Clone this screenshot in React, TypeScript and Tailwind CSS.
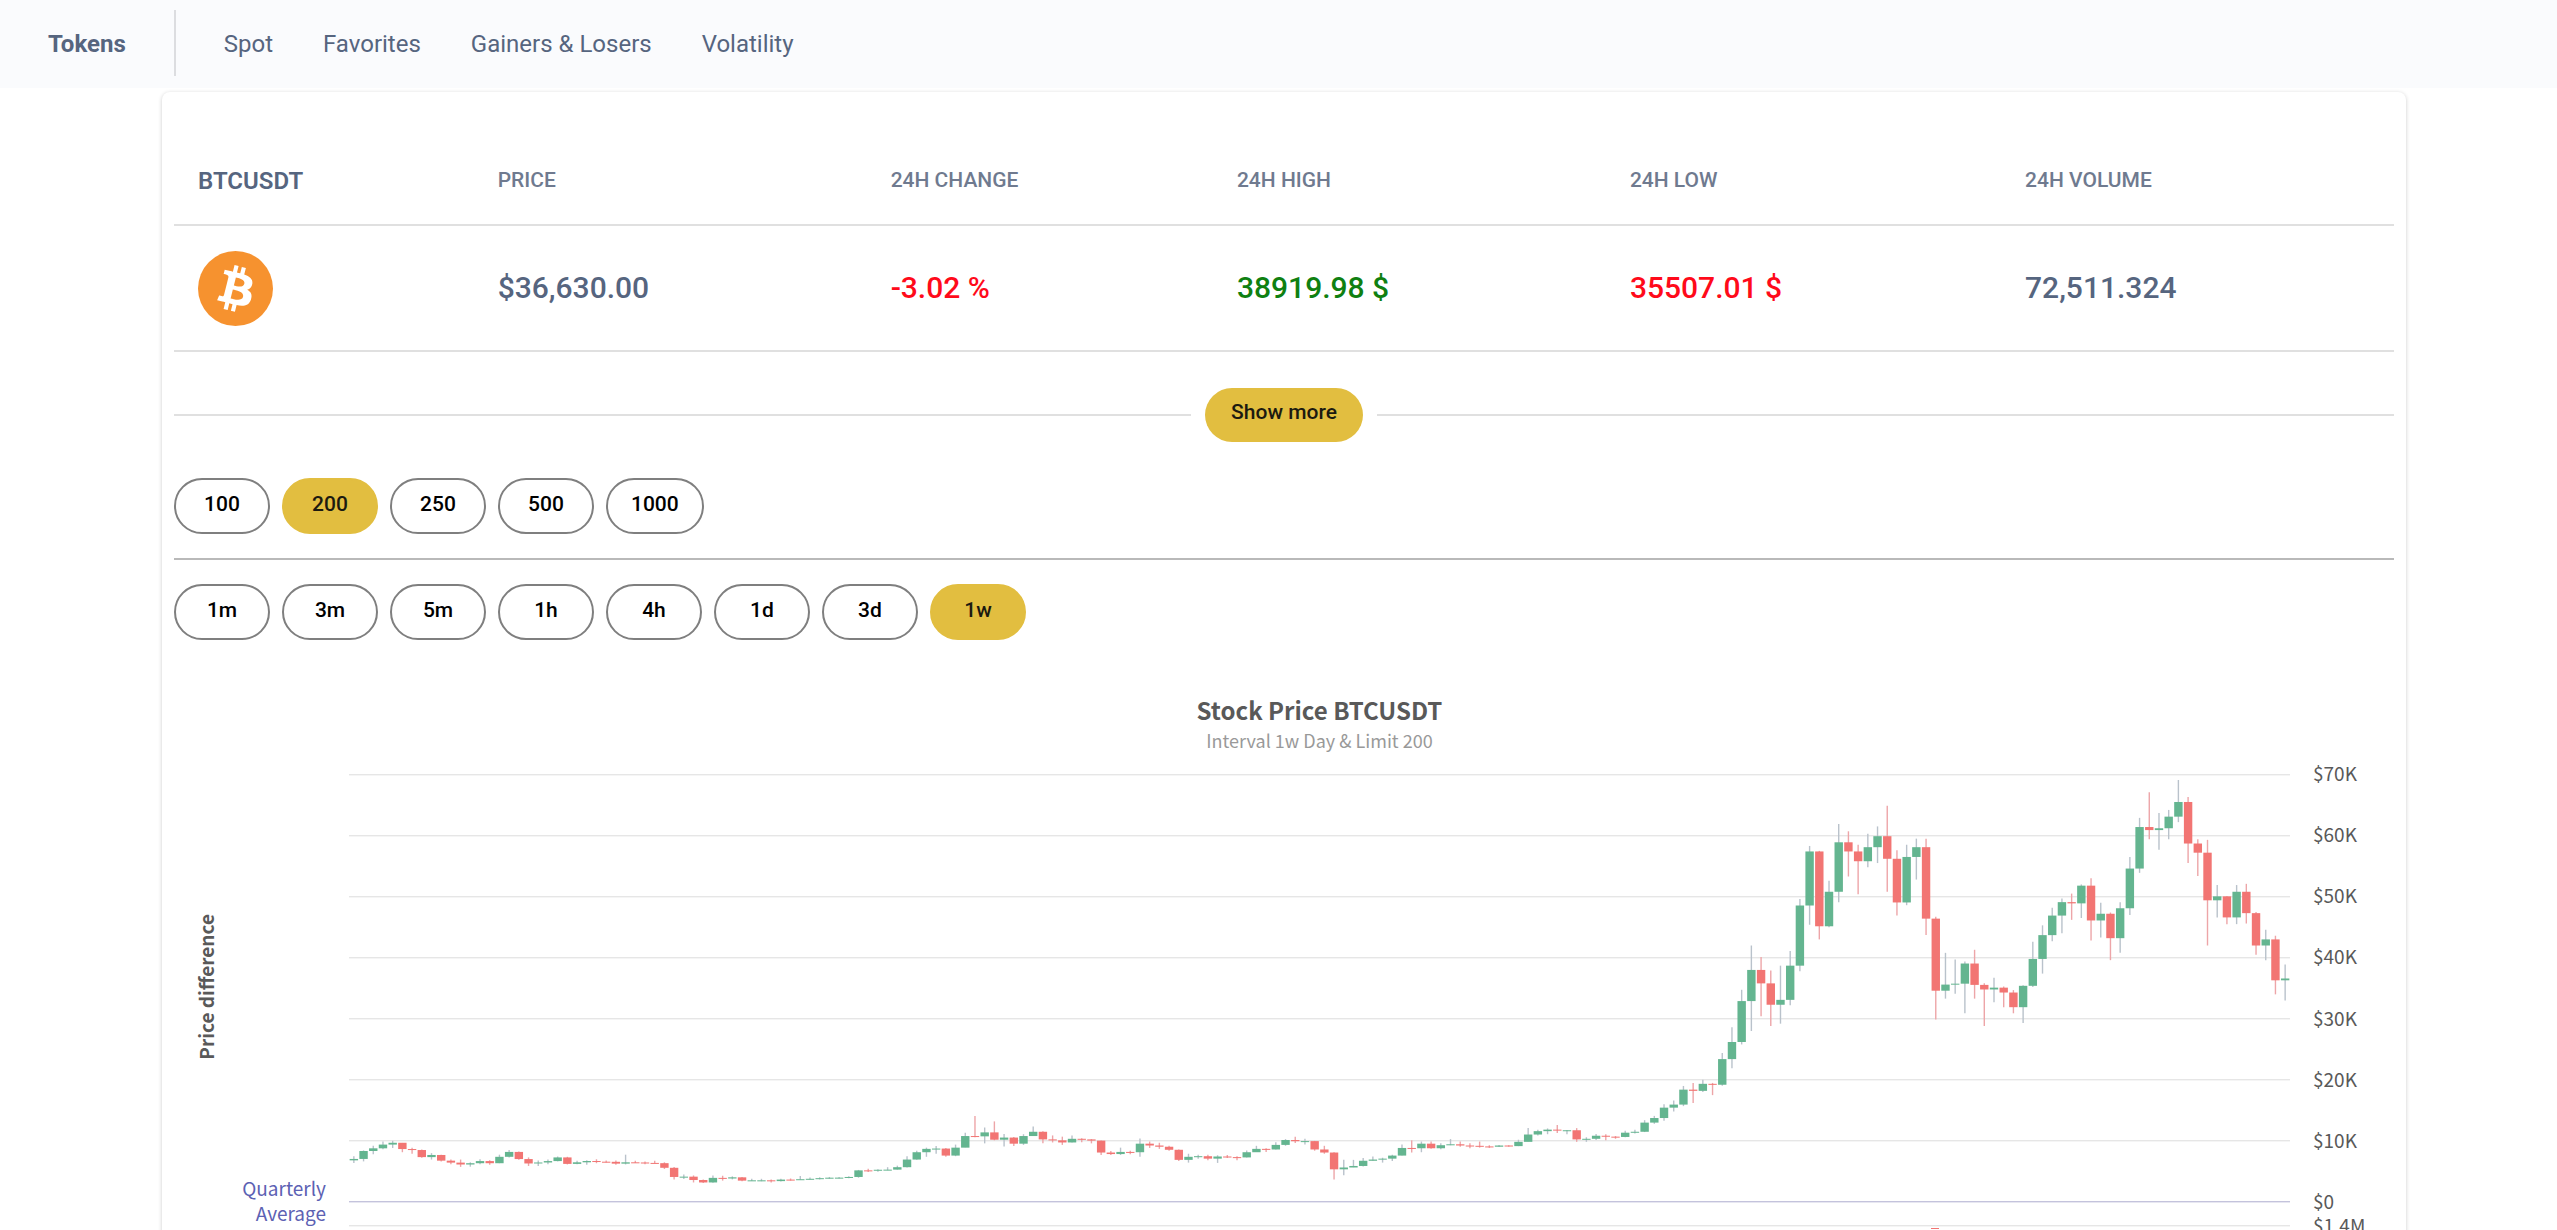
import { useState } from "react";

const tabs = ["Spot", "Favorites", "Gainers & Losers", "Volatility"];

const limits = ["100", "200", "250", "500", "1000"];
const intervals = ["1m", "3m", "5m", "1h", "4h", "1d", "3d", "1w"];

const priceTicks = ["$70K", "$60K", "$50K", "$40K", "$30K", "$20K", "$10K", "$0"];

// weekly candles in thousands of dollars: [high, low, close], each one opens at the previous close
const candles: [number, number, number][] = [
  [7.5, 6.4, 7.05], [8.45, 6.65, 8.35], [9.2, 7.8, 8.79], [9.9, 8.65, 9.4], [10.02, 8.85, 9.7],
  [9.67, 8.15, 8.67], [8.9, 7.9, 8.51], [8.6, 7.25, 7.35], [8, 6.95, 7.7], [7.75, 6.65, 6.77],
  [6.95, 6.2, 6.45], [6.95, 5.75, 6.14], [6.5, 5.78, 6.35], [7, 6.2, 6.7], [6.85, 6.1, 6.35],
  [7.75, 6.35, 7.4], [8.5, 7.3, 8.2], [8.25, 6.9, 7.03], [7.3, 5.9, 6.31], [6.8, 5.9, 6.47],
  [6.95, 6.2, 6.7], [7.45, 6.65, 7.3], [7.4, 6.15, 6.24], [6.75, 6.2, 6.5], [6.85, 6.1, 6.71],
  [7, 6.35, 6.6], [6.8, 6.45, 6.58], [6.8, 6.1, 6.28], [7.75, 6.15, 6.5], [6.75, 6.4, 6.47],
  [6.65, 6.2, 6.4], [6.75, 6.35, 6.36], [6.5, 5.4, 5.6], [5.75, 3.7, 4.1], [4.5, 3.75, 4.15],
  [4.35, 3.2, 3.6], [3.7, 3.1, 3.2], [4.35, 3.15, 3.95], [4.3, 3.5, 3.85], [4.2, 3.7, 4.04],
  [4.1, 3.4, 3.5], [3.8, 3.45, 3.55], [3.8, 3.4, 3.55], [3.7, 3.2, 3.42], [3.8, 3.35, 3.67],
  [3.85, 3.5, 3.62], [4.25, 3.65, 3.73], [4, 3.7, 3.8], [4.05, 3.7, 3.9], [4.1, 3.8, 3.98],
  [4.08, 3.85, 3.99], [4.2, 3.9, 4.1], [5.25, 3.98, 5.18], [5.45, 4.9, 5.15], [5.35, 4.95, 5.28],
  [5.7, 5.2, 5.3], [5.95, 5.3, 5.7], [7.5, 5.65, 6.95], [8.4, 6.9, 8.15], [8.9, 7.4, 8.7],
  [9.15, 7.9, 8.75], [8.85, 7.4, 7.6], [9.4, 7.5, 8.9], [11.35, 8.95, 10.8], [14.1, 10.6, 10.75],
  [12.2, 9.6, 11.4], [13.2, 10.1, 10.2], [11.15, 9.1, 10.55], [10.65, 9.15, 9.55], [11.1, 9.35, 10.8],
  [12.35, 10.8, 11.5], [11.6, 9.6, 10.25], [10.9, 9.75, 10.1], [10.7, 9.35, 9.75], [10.9, 9.75, 10.35],
  [10.45, 9.8, 10.25], [10.3, 9.6, 10.05], [10.05, 7.7, 8.1], [8.35, 7.7, 7.85], [8.9, 7.7, 8.2],
  [8.4, 7.8, 8.15], [10.4, 7.4, 9.55], [9.9, 8.85, 9.25], [9.7, 8.7, 9.05], [9.2, 8.4, 8.55],
  [8.6, 6.7, 6.9], [7.9, 6.45, 7.4], [7.75, 7.1, 7.5], [7.75, 6.85, 7.1], [7.65, 6.4, 7.45],
  [7.7, 7.2, 7.35], [7.5, 6.85, 7.3], [8.45, 7.3, 8.15], [9.2, 8.2, 8.7], [8.8, 8.2, 8.6],
  [9.8, 8.6, 9.35], [10.3, 9.2, 10.15], [10.7, 9.65, 9.95], [10.35, 9.4, 9.97], [10, 8.4, 8.6],
  [9.2, 7.9, 8.1], [8.15, 3.7, 5.35], [6.9, 4.4, 5.65], [6.9, 5.7, 5.9], [7.2, 5.8, 6.75],
  [7.45, 6.75, 6.95], [7.25, 6.45, 7.1], [7.75, 6.7, 7.6], [9.4, 7.6, 8.85], [10.1, 8.1, 8.8],
  [9.9, 8.15, 9.55], [9.9, 8.7, 8.8], [9.6, 8.65, 9.3], [10.3, 9.3, 9.45], [9.9, 9.05, 9.25],
  [9.6, 8.8, 9.2], [9.9, 8.9, 9.1], [9.3, 8.85, 9.05], [9.35, 9, 9.25], [9.3, 9.05, 9.15],
  [10.2, 9.15, 9.85], [12.1, 9.95, 11.05], [11.85, 10.9, 11.6], [12.05, 11.1, 11.85], [12.6, 11.3, 11.7],
  [11.8, 11.1, 11.75], [12.1, 9.85, 10.25], [10.6, 9.85, 10.35], [11.15, 10.15, 10.85], [11.1, 10.1, 10.7],
  [10.8, 10.35, 10.65], [11.65, 10.6, 11.35], [11.85, 11.2, 11.5], [13.4, 11.45, 13], [14.1, 12.8, 13.75],
  [16, 13.3, 15.45], [16.6, 14.8, 15.95], [19, 15.7, 18.4], [19.5, 16.2, 18.2], [20, 18, 19.35],
  [19.5, 17.5, 19.2], [24.4, 19.05, 23.4], [28.6, 21.9, 26.2], [34.75, 25.8, 32.9], [42, 28, 38],
  [40.1, 30.4, 35.8], [37.9, 28.8, 32.3], [38.7, 29.2, 33.1], [41.1, 32.2, 38.7], [49.6, 37.8, 48.55],
  [58.3, 45.4, 57.4], [57.5, 43, 45.15], [52.6, 45, 50.8], [61.9, 49.1, 58.9], [60.7, 53.3, 57.4],
  [58.5, 50.4, 55.8], [60.3, 54.8, 58.1], [61.5, 55.5, 59.9], [64.9, 50.8, 56.2], [57.6, 46.9, 49.05],
  [58.5, 48.6, 56.5], [59.5, 52.8, 58.1], [59.5, 43.7, 46.4], [46.7, 29.9, 34.6], [40.8, 33.3, 35.6],
  [39.7, 34.1, 35.75], [39.4, 30.9, 39.05], [41.3, 33.3, 35.55], [35.8, 28.8, 34.8], [36.7, 32.7, 35.1],
  [35.3, 31.9, 34.3], [34.7, 30.9, 31.9], [35.5, 29.3, 35.4], [42.6, 35.2, 39.8], [45.3, 37.4, 43.7],
  [48.2, 42.7, 46.9], [49.7, 44, 49.1], [50.5, 46.2, 48.9], [52, 46.5, 51.8], [53, 42.8, 46.1],
  [49, 43.3, 47.2], [47.4, 39.6, 43.2], [49.1, 40.8, 48.1], [56.5, 47, 54.6], [62.9, 53.9, 61.4],
  [67.1, 59.4, 60.9], [63.7, 57.7, 61.2], [64.2, 59.4, 63.1], [69.1, 62.2, 65.5], [66.3, 55.5, 58.7],
  [59.4, 53.4, 57.2], [59.3, 42, 49.4], [51.9, 46.6, 50.05], [50.1, 45.5, 46.6], [51.9, 45.5, 50.8],
  [52.1, 45.6, 47.3], [47.5, 40.5, 42], [44.6, 39.6, 43], [43.6, 34, 36.3], [38.9, 33, 36.6],
];

const FIRST_OPEN = 6.82;
const PLOT_WIDTH = 1941;
const PLOT_HEIGHT = 456;
const STEP = PLOT_WIDTH / candles.length;

// $70K sits at the top line, $0 at the bottom one
const toY = (price: number) => 429 - price * 6.107;

function BitcoinIcon() {
  return (
    <svg viewBox="0 0 32 32" className="h-[75px] w-[75px]" aria-label="Bitcoin" role="img">
      <circle cx="16" cy="16" r="16" fill="#f6922f" />
      <path
        fill="#fff"
        d="M23.189 14.02c.314-2.096-1.283-3.223-3.465-3.975l.708-2.84-1.728-.43-.69 2.765c-.454-.114-.92-.22-1.385-.326l.695-2.783L15.596 6l-.708 2.839c-.376-.086-.746-.17-1.104-.26l.002-.009-2.384-.595-.46 1.846s1.283.294 1.256.312c.7.175.826.638.805 1.006l-.806 3.235c.048.012.11.03.18.057l-.183-.045-1.13 4.532c-.086.212-.303.531-.793.41.018.025-1.256-.313-1.256-.313l-.858 1.978 2.25.561c.418.105.828.215 1.231.318l-.715 2.872 1.727.43.708-2.84c.472.127.93.245 1.378.357l-.706 2.828 1.728.43.715-2.866c2.948.558 5.164.333 6.097-2.333.752-2.146-.037-3.385-1.588-4.192 1.13-.26 1.98-1.003 2.207-2.538zm-3.95 5.538c-.533 2.147-4.148.986-5.32.695l.95-3.805c1.172.293 4.929.872 4.37 3.11zm.535-5.569c-.487 1.953-3.495.96-4.47.717l.86-3.45c.975.243 4.118.696 3.61 2.733z"
      />
    </svg>
  );
}

function NavBar() {
  return (
    <nav className="flex h-[88px] items-center bg-[#fafbfd] px-12 text-2xl text-[#56657f]">
      <a href="#tokens" className="font-bold">
        Tokens
      </a>
      <div className="mx-12 mb-[2px] h-[66px] w-[2px] bg-[#dcdde0]" />
      <div className="flex gap-[50px]">
        {tabs.map((tab) => (
          <a key={tab} href="#tokens">
            {tab}
          </a>
        ))}
      </div>
    </nav>
  );
}

function TickerTable() {
  return (
    <table className="w-full table-fixed text-left">
      <thead>
        <tr className="h-[90px] border-b-2 border-[#e0e0e0] text-[21px] text-[#6f7a8f]">
          <th className="w-[13.5%] px-6 pt-[3px] text-2xl font-semibold text-[#56657f]">BTCUSDT</th>
          <th className="w-[17.7%] px-6 pt-[3px] font-medium">PRICE</th>
          <th className="w-[15.6%] px-6 pt-[3px] font-medium">24H CHANGE</th>
          <th className="w-[17.7%] px-6 pt-[3px] font-medium">24H HIGH</th>
          <th className="w-[17.8%] px-6 pt-[3px] font-medium">24H LOW</th>
          <th className="w-[17.7%] px-6 pt-[3px] font-medium">24H VOLUME</th>
        </tr>
      </thead>
      <tbody>
        <tr className="h-[126px] border-b-2 border-[#e0e0e0] text-3xl font-medium text-[#56657f]">
          <td className="px-6">
            <BitcoinIcon />
          </td>
          <td className="px-6">$36,630.00</td>
          <td className="px-6 text-[#ff0a1a]">-3.02 %</td>
          <td className="px-6 text-[#0f8011]">38919.98 $</td>
          <td className="px-6 text-[#ff0a1a]">35507.01 $</td>
          <td className="px-6">72,511.324</td>
        </tr>
      </tbody>
    </table>
  );
}

type PillGroupProps = {
  label: string;
  options: string[];
  value: string;
  onChange: (value: string) => void;
};

function PillGroup({ label, options, value, onChange }: PillGroupProps) {
  return (
    <div role="group" aria-label={label} className="flex gap-3">
      {options.map((option) => (
        <button
          key={option}
          type="button"
          aria-pressed={option === value}
          onClick={() => onChange(option)}
          className={
            option === value
              ? "h-14 min-w-24 rounded-full border-2 border-[#e2be40] bg-[#e2be40] px-[23px] pb-0.5 text-[21px] font-medium text-[#1c1a10]"
              : "h-14 min-w-24 rounded-full border-2 border-[#7f7f7f] bg-white px-[23px] pb-0.5 text-[21px] font-medium text-black"
          }
        >
          {option}
        </button>
      ))}
    </div>
  );
}

function CandlePlot() {
  return (
    <svg
      viewBox={`0 0 ${PLOT_WIDTH} ${PLOT_HEIGHT}`}
      preserveAspectRatio="none"
      className="h-[456px] w-full"
      role="img"
      aria-label="Weekly candlestick chart"
    >
      {priceTicks.map((tick, i) => (
        <rect
          key={tick}
          x="0"
          y={Math.round(toY(70 - i * 10)) - 1}
          width={PLOT_WIDTH}
          height="1.4"
          fill={tick === "$0" ? "#c4c3dc" : "#e6e6e6"}
        />
      ))}
      {/* top of the volume pane */}
      <rect x="0" y="452" width={PLOT_WIDTH} height="1.4" fill="#e6e6e6" />
      <rect x="1582" y="455" width="8" height="1" fill="#f27573" />
      {candles.map(([high, low, close], i) => {
        const open = i === 0 ? FIRST_OPEN : candles[i - 1][2];
        const up = close >= open;
        const center = (i + 0.5) * STEP;
        const top = toY(Math.max(open, close));
        const height = Math.max(toY(Math.min(open, close)) - top, 1);
        return (
          <g key={i}>
            <line
              x1={center}
              x2={center}
              y1={toY(high)}
              y2={toY(low)}
              stroke={up ? "#b9c2cb" : "#eda5a8"}
              strokeWidth="1.4"
            />
            <rect
              x={center - 4.2}
              y={top}
              width="8.4"
              height={height}
              fill={up ? "#64b590" : "#f27573"}
            />
          </g>
        );
      })}
    </svg>
  );
}

function PriceChart({ interval, limit }: { interval: string; limit: string }) {
  return (
    <section className="pt-[52px] font-['Noto_Sans_CJK_SC','Noto_Sans',sans-serif] text-[19px] text-[#595959]">
      <div className="flex h-[81px] flex-col items-center pr-[104px] pl-[175px]">
        <h2 className="text-2xl leading-9 font-bold">Stock Price BTCUSDT</h2>
        <p className="text-lg leading-6 text-[#999999]">
          Interval {interval} Day &amp; Limit {limit}
        </p>
      </div>

      <div className="grid grid-cols-[175px_1fr_104px]">
        <div>
          <div className="flex h-[402px] items-center pt-[26px] pl-5">
            <span className="rotate-180 leading-6 font-bold [writing-mode:vertical-rl]">
              Price difference
            </span>
          </div>
          <div className="pr-[23px] text-right leading-[25px] text-[#5c61b3]">
            Quarterly
            <br />
            Average
          </div>
        </div>

        <CandlePlot />

        <div className="-mt-3 pl-[23px] leading-6">
          <div className="flex h-[452px] flex-col justify-between">
            {priceTicks.map((tick) => (
              <span key={tick}>{tick}</span>
            ))}
          </div>
          <span>$1.4M</span>
        </div>
      </div>
    </section>
  );
}

export default function App() {
  const [limit, setLimit] = useState("200");
  const [interval, setInterval] = useState("1w");

  return (
    <div className="h-screen overflow-hidden bg-white font-[Roboto,sans-serif]">
      <NavBar />
      <main className="pt-1 pr-[151px] pl-[162px]">
        <div className="rounded-lg bg-white px-3 pt-[43px] pb-16 shadow-[0_1px_4px_rgba(0,0,0,0.2)]">
          <TickerTable />

          <div className="mt-9 flex items-center gap-[14px]">
            <div className="h-[2px] flex-1 bg-[#e0e0e0]" />
            <button
              type="button"
              className="h-[54px] rounded-full bg-[#e2be40] px-[26px] pb-1 text-[21px] font-medium text-[#1c1a10]"
            >
              Show more
            </button>
            <div className="h-[2px] flex-1 bg-[#e0e0e0]" />
          </div>

          <div className="mt-9">
            <PillGroup label="Limit" options={limits} value={limit} onChange={setLimit} />
          </div>
          <hr className="my-6 border-t-2 border-[#b9b9b9]" />
          <PillGroup label="Interval" options={intervals} value={interval} onChange={setInterval} />

          <PriceChart interval={interval} limit={limit} />
        </div>
      </main>
    </div>
  );
}
